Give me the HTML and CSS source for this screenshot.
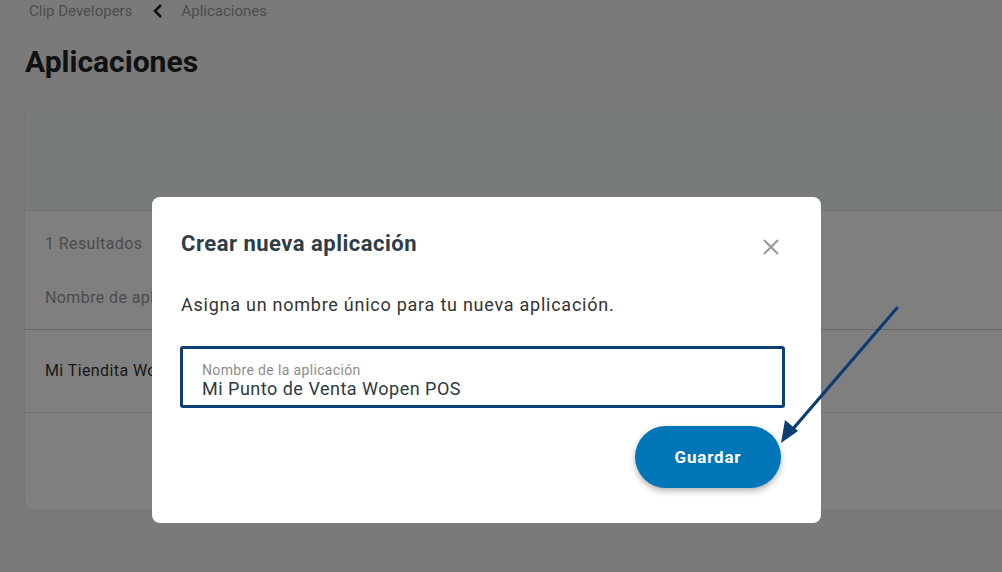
FILE: index.html
```html
<!DOCTYPE html>
<html lang="es">
<head>
    <meta charset="UTF-8">
    <meta name="viewport" content="width=device-width, initial-scale=1.0">
    <title>Aplicaciones - Clip Developers</title>
    <link rel="stylesheet" href="styles.css">
</head>
<body>
    <div class="page">
        <nav class="breadcrumb">
            <span class="crumb">Clip Developers</span>
            <svg class="crumb-sep" width="12" height="16" viewBox="0 0 12 16">
                <path d="M9 2 L3 8 L9 14" fill="none" stroke="#222" stroke-width="2.6"/>
            </svg>
            <span class="crumb">Aplicaciones</span>
        </nav>

        <h1 class="page-title">Aplicaciones</h1>

        <div class="card">
            <div class="card-header"></div>
            <div class="results">1 Resultados</div>
            <div class="table-head">Nombre de aplicación</div>
            <div class="table-row">Mi Tiendita Wopen</div>
            <div class="card-foot"></div>
        </div>
    </div>

    <!-- modal -->
    <div class="overlay">
        <div class="modal">
            <div class="modal-head">
                <h2>Crear nueva aplicación</h2>
                <svg class="close" width="18" height="18" viewBox="0 0 18 18">
                    <path d="M2 2 L16 16 M16 2 L2 16" stroke="#9b9b9b" stroke-width="2.2"/>
                </svg>
            </div>
            <p class="modal-text">Asigna un nombre único para tu nueva aplicación.</p>
            <div class="field">
                <span class="field-label">Nombre de la aplicación</span>
                <span class="field-value">Mi Punto de Venta Wopen POS</span>
            </div>
            <div class="modal-actions">
                <button class="btn-primary">Guardar</button>
            </div>
        </div>
    </div>

    <svg class="pointer" width="1002" height="572" viewBox="0 0 1002 572">
        <line x1="897" y1="308" x2="792" y2="430" stroke="#0b3d75" stroke-width="3.2" stroke-linecap="round"/>
        <polygon points="781,443 785,420 798,431" fill="#0b3d75"/>
    </svg>
</body>
</html>
```

FILE: styles.css
```css
body {
    margin: 0;
    width: 1002px;
    height: 572px;
    overflow: hidden;
    font-family: 'Roboto', 'Liberation Sans', sans-serif;
    background-color: #f5f5f5;
    color: #222;
    position: relative;
}

.page {
    padding: 0 0 0 25px;
}

.breadcrumb {
    display: flex;
    align-items: center;
    height: 22px;
    padding-left: 4px;
}

.crumb {
    font-size: 15px;
    color: #9a9a9a;
}

.crumb-sep {
    margin: 0 17px 0 20px;
}

.page-title {
    margin: 20px 0 0;
    font-size: 30px;
    font-weight: 700;
    line-height: 40px;
    color: #222;
}

.card {
    margin-top: 26px;
    width: 1010px;
    height: 402px;
    background-color: #fff;
    border-radius: 10px;
    box-shadow: 0 0 0 1px #eaeaea;
    overflow: hidden;
}

.card-header {
    height: 102px;
    background-color: #eff7f7;
    border-bottom: 1px solid #e2e2e2;
}

.results {
    padding: 23px 0 0 20px;
    font-size: 16px;
    line-height: 20px;
    letter-spacing: 0.4px;
    color: #999;
}

.table-head {
    padding: 34px 0 0 20px;
    height: 41px;
    font-size: 16px;
    line-height: 20px;
    letter-spacing: 0.4px;
    color: #999;
    border-bottom: 1px solid #cfcfcf;
}

.table-row {
    padding: 31px 0 0 20px;
    height: 51px;
    font-size: 16px;
    line-height: 20px;
    letter-spacing: 0.4px;
    color: #333;
    border-bottom: 1px solid #dedede;
}

/* modal */

.overlay {
    position: absolute;
    inset: 0;
    background-color: rgba(0, 0, 0, 0.5);
    padding: 197px 0 0 152px;
}

.modal {
    width: 669px;
    height: 326px;
    box-sizing: border-box;
    background-color: #fff;
    border-radius: 8px;
    padding: 33px 36px 0 28px;
}

.modal-head {
    display: flex;
    justify-content: space-between;
    align-items: center;
    padding-left: 1px;
}

.modal-head h2 {
    margin: 0;
    font-size: 22px;
    font-weight: 700;
    line-height: 28px;
    letter-spacing: 0.5px;
    color: #2e3d48;
}

.close {
    margin: 6px 5px 0 0;
}

.modal-text {
    margin: 35px 0 0 1px;
    font-size: 18px;
    line-height: 24px;
    color: #333;
    letter-spacing: 0.75px;
}

.field {
    margin-top: 29px;
    height: 62px;
    box-sizing: border-box;
    border: 3px solid #0c3f78;
    border-radius: 3px;
    padding: 13px 0 0 19px;
    display: flex;
    flex-direction: column;
}

.field-label {
    font-size: 14px;
    line-height: 16px;
    letter-spacing: 0.35px;
    color: #8c8c8c;
}

.field-value {
    font-size: 18px;
    line-height: 21px;
    letter-spacing: 0.5px;
    color: #2c3a44;
}

.modal-actions {
    display: flex;
    justify-content: flex-end;
    margin-top: 18px;
    padding-right: 4px;
}

.btn-primary {
    width: 146px;
    height: 62px;
    border: none;
    border-radius: 31px;
    background-color: #0075b8;
    color: #fff;
    font-family: 'Roboto', sans-serif;
    font-size: 17px;
    font-weight: 700;
    letter-spacing: 0.8px;
    box-shadow: 0 3px 6px rgba(0, 0, 0, 0.3);
    cursor: pointer;
}

.pointer {
    position: absolute;
    left: 0;
    top: 0;
    pointer-events: none;
}
```
